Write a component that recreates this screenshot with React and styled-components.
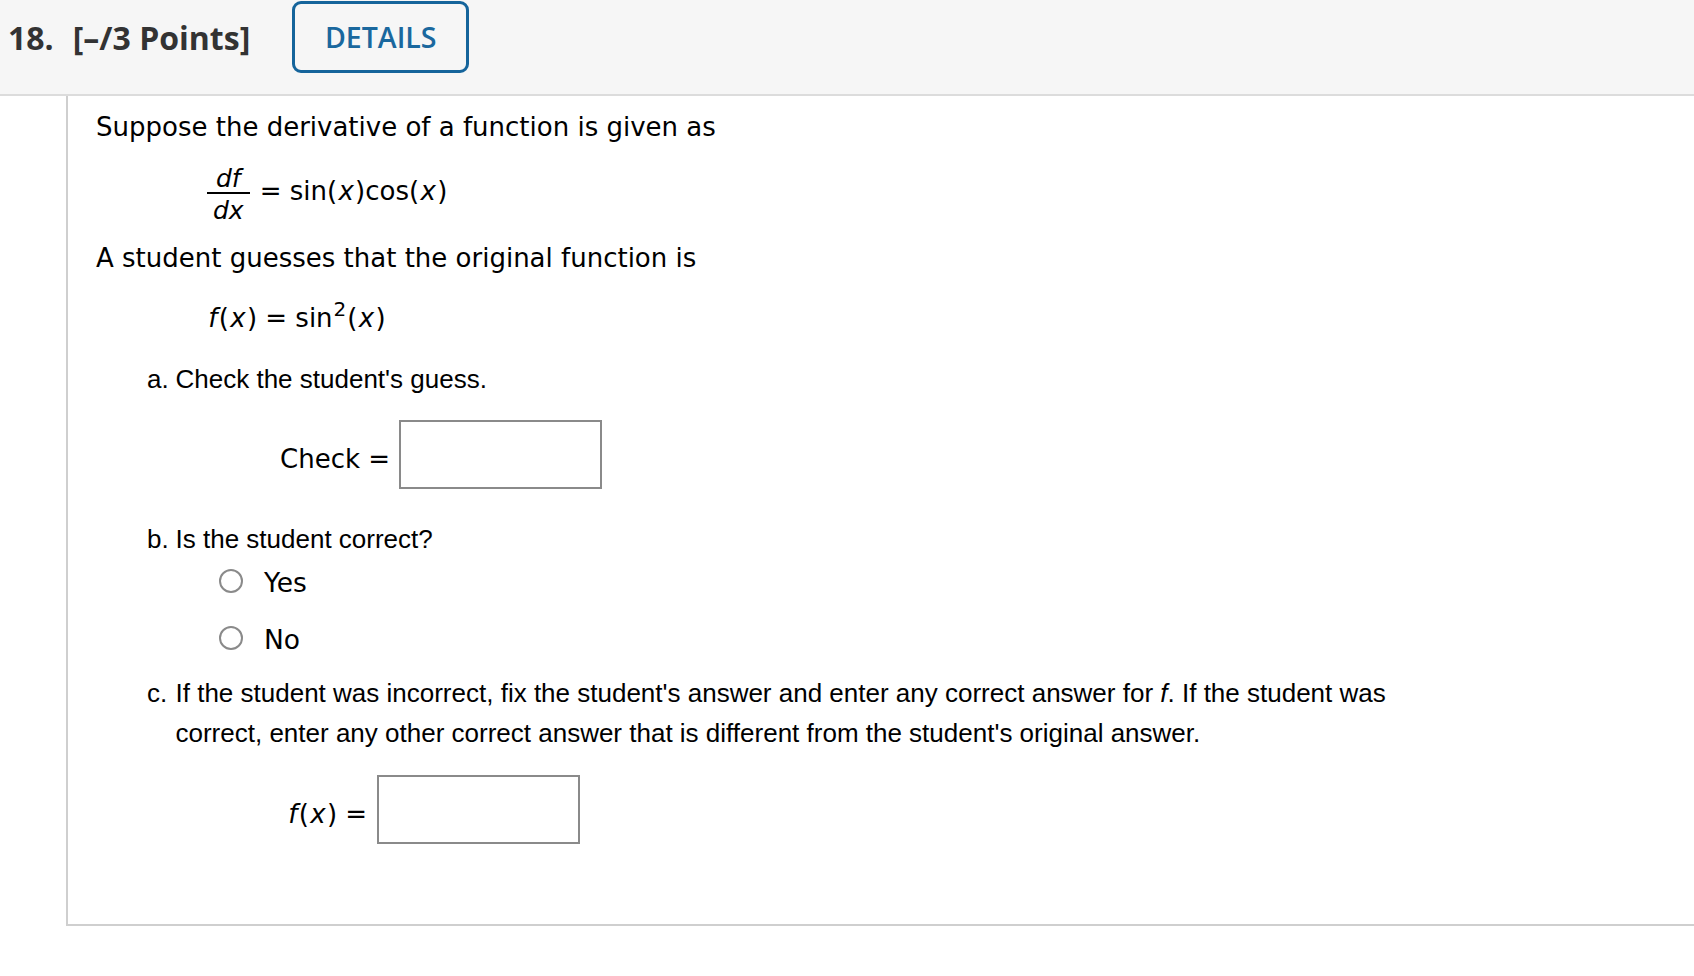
import React from "react";
import styled, { createGlobalStyle } from "styled-components";

const Global = createGlobalStyle`
  html, body { margin: 0; padding: 0; background: #ffffff; }
  body { font-family: "DejaVu Sans", Verdana, sans-serif; color: #000; }
  * { box-sizing: border-box; }
`;

const Header = styled.header`
  background: #f6f6f6;
  border-bottom: 2px solid #dcdcdc;
  height: 96px;
  padding: 1px 0 0 8px;
`;

const HeaderRow = styled.div`
  display: flex;
  align-items: center;
  height: 72px;
  font-family: "Open Sans", "Noto Sans", sans-serif;
`;

const Number = styled.span`
  font-size: 32px;
  font-weight: 700;
  color: #333;
  margin-right: ${(p) => p.$gap}px;
`;

const DetailsButton = styled.button`
  width: 177px;
  height: 72px;
  border: 3px solid #15649b;
  border-radius: 9px;
  background: transparent;
  color: #1a689e;
  font-family: "Open Sans", "Noto Sans", sans-serif;
  font-size: 28.5px;
  font-weight: 600;
  padding: 0;
  cursor: pointer;
`;

const Panel = styled.section`
  margin-left: 66px;
  border-left: 2px solid #cfcfcf;
  border-bottom: 2px solid #cfcfcf;
  padding: 11px 0 80px 28px;
`;

const Para = styled.div`
  font-family: "DejaVu Sans", Verdana, sans-serif;
  font-size: 26px;
  line-height: 40px;
  margin-top: ${(p) => p.$mt || 0}px;
  margin-left: ${(p) => p.$ml || 0}px;
  white-space: nowrap;
`;

const I = styled.i`
  font-style: italic;
  padding: 0 ${(p) => (p.$tight ? 0 : 1.3)}px;
`;

const Sup = styled.sup`
  font-size: 20px;
  line-height: 0;
  vertical-align: 11px;
  padding: 0 1px;
`;

const MathRow = styled.div`
  display: flex;
  align-items: flex-start;
  margin-top: ${(p) => p.$mt}px;
  margin-left: ${(p) => p.$ml}px;
  font-family: "DejaVu Sans", Verdana, sans-serif;
`;

const Fraction = styled.span`
  display: inline-flex;
  flex-direction: column;
  align-items: stretch;
  font-size: 25px;
  font-style: italic;
  text-align: center;
`;

const Num = styled.span`
  line-height: 27px;
  padding: 0 6px;
`;

const Bar = styled.span`
  height: 2px;
  background: #000;
`;

const Den = styled.span`
  line-height: 27px;
  padding: 3px 6px 0;
`;

const EqText = styled.span`
  font-size: 26px;
  line-height: 40px;
  margin-top: 6.3px;
  margin-left: 10px;
  white-space: nowrap;
`;

const Part = styled.div`
  display: flex;
  font-family: "Liberation Sans", Arial, sans-serif;
  font-size: 26px;
  line-height: 40px;
  margin-top: ${(p) => p.$mt}px;
  margin-left: 51px;
`;

const Marker = styled.span`
  flex: none;
  width: 28.5px;
`;

const PartText = styled.span`
  flex: 1;
  white-space: nowrap;
`;

const AnswerRow = styled.div`
  display: flex;
  align-items: center;
  margin-top: ${(p) => p.$mt}px;
  margin-left: ${(p) => p.$ml}px;
  font-family: "DejaVu Sans", Verdana, sans-serif;
  font-size: 26px;
`;

const AnswerLabel = styled.label`
  line-height: 40px;
  padding-top: 9px;
  margin-right: ${(p) => p.$gap}px;
  white-space: nowrap;
`;

const AnswerBox = styled.input`
  width: 203px;
  height: 69px;
  border: 2px solid #8a8a8a;
  border-radius: 0;
  background: #fff;
  font-size: 24px;
  padding: 0 8px;
  outline: none;
`;

const RadioRow = styled.label`
  display: flex;
  align-items: center;
  margin-top: ${(p) => p.$mt}px;
  margin-left: 123px;
  font-family: "DejaVu Sans", Verdana, sans-serif;
  font-size: 26.5px;
  line-height: 40px;
`;

const Radio = styled.input`
  appearance: none;
  -webkit-appearance: none;
  width: 24px;
  height: 24px;
  margin: 0 21px 0 0;
  border: 2px solid #8a8a8a;
  border-radius: 50%;
  background: #fff;
  position: relative;
  top: -2px;
  flex: none;
`;

export default function App() {
  return (
    <>
      <Global />
      <Header>
        <HeaderRow>
          <Number $gap={19}>18.</Number>
          <Number $gap={42}>[–/3 Points]</Number>
          <DetailsButton type="button">DETAILS</DetailsButton>
        </HeaderRow>
      </Header>
      <Panel>
        <Para>Suppose the derivative of a function is given as</Para>
        <MathRow $mt={17.7} $ml={111}>
          <Fraction>
            <Num>df</Num>
            <Bar />
            <Den>dx</Den>
          </Fraction>
          <EqText>
            = sin(<I>x</I>)cos(<I>x</I>)
          </EqText>
        </MathRow>
        <Para $mt={14.5}>A student guesses that the original function is</Para>
        <Para $mt={19.5} $ml={111}>
          <I>f</I>(<I>x</I>) = sin<Sup>2</Sup>(<I>x</I>)
        </Para>
        <Part $mt={21}>
          <Marker>a.</Marker>
          <PartText>Check the student's guess.</PartText>
        </Part>
        <AnswerRow $mt={21.3} $ml={184}>
          <AnswerLabel $gap={9}>Check =</AnswerLabel>
          <AnswerBox type="text" aria-label="Check" />
        </AnswerRow>
        <Part $mt={30}>
          <Marker>b.</Marker>
          <PartText>Is the student correct?</PartText>
        </Part>
        <RadioRow $mt={3.7}>
          <Radio type="radio" name="correct" />
          Yes
        </RadioRow>
        <RadioRow $mt={17}>
          <Radio type="radio" name="correct" />
          No
        </RadioRow>
        <Part $mt={13.5}>
          <Marker>c.</Marker>
          <PartText>
            If the student was incorrect, fix the student's answer and enter any correct answer for <I $tight>f</I>.
            If the student was
            <br />
            correct, enter any other correct answer that is different from the student's original answer.
          </PartText>
        </Part>
        <AnswerRow $mt={21.5} $ml={191}>
          <AnswerLabel $gap={10}>
            <I>f</I>(<I>x</I>) =
          </AnswerLabel>
          <AnswerBox type="text" aria-label="f(x)" />
        </AnswerRow>
      </Panel>
    </>
  );
}
